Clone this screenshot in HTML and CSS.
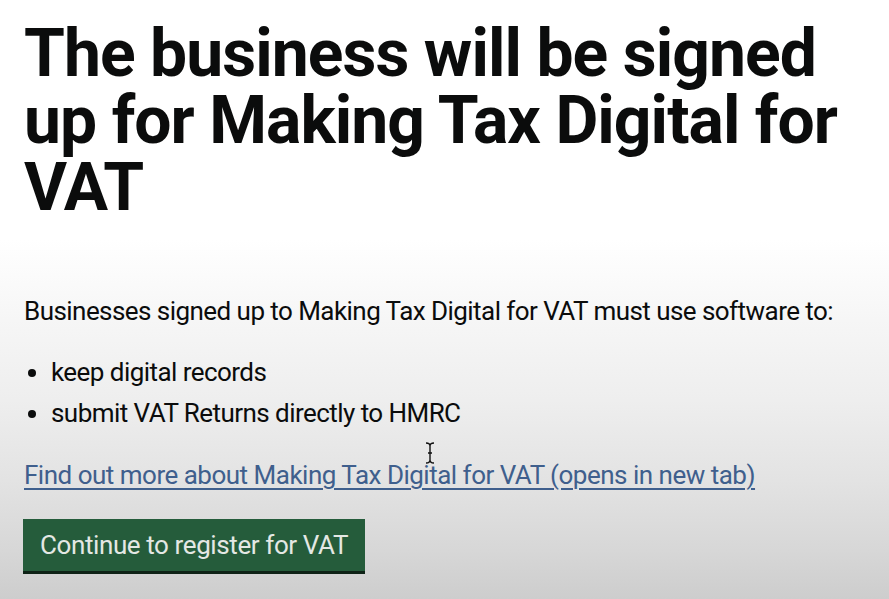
FILE: index.html
```html
<!DOCTYPE html>
<html lang="en">
<head>
    <meta charset="UTF-8">
    <title>Making Tax Digital for VAT</title>
    <link rel="stylesheet" href="styles.css">
</head>
<body>
    <main class="page">
        <h1 class="heading">The business will be signed up for Making Tax Digital for VAT</h1>
        <p class="body-text">Businesses signed up to Making Tax Digital for VAT must use software to:</p>
        <ul class="bullets">
            <li>keep digital records</li>
            <li>submit VAT Returns directly to HMRC</li>
        </ul>
        <p class="link-row">
            <a class="link" href="#">Find out more about Making Tax Digital for VAT (opens in new tab)</a>
            <svg class="cursor" width="10" height="22" viewBox="0 0 10 22">
                <path d="M1 1 Q5 1 5 4 V18 Q5 21 1 21 M9 1 Q5 1 5 4 M5 18 Q5 21 9 21 M3 11 H7" fill="none" stroke="#111" stroke-width="1.4"/>
            </svg>
        </p>
        <button class="button">Continue to register for VAT</button>
    </main>
</body>
</html>
```

FILE: styles.css
```css
html, body {
    height: 100%;
}
body {
    margin: 0;
    font-family: Roboto, 'Liberation Sans', sans-serif;
    color: #0b0c0c;
    background: linear-gradient(#fff 0, #fff 240px, #f6f6f6 320px, #eeeeee 400px, #e3e3e3 480px, #d7d7d7 550px, #cdcdcd 599px);
    overflow: hidden;
}
.page {
    padding: 20px 24px 0 24px;
    width: 830px;
}
.heading {
    margin: 0 0 72px 0;
    font-size: 66px;
    line-height: 67px;
    font-weight: 700;
    letter-spacing: -0.95px;
}
.body-text {
    margin: 0 0 25px 0;
    font-size: 26px;
    line-height: 36px;
    letter-spacing: -0.55px;
}
.bullets {
    margin: 0 0 26px 0;
    padding-left: 27px;
    font-size: 26px;
    line-height: 36px;
    letter-spacing: -0.55px;
}
.bullets li {
    margin-bottom: 5px;
}
.link-row {
    position: relative;
    margin: 0 0 26px 0;
    font-size: 26px;
    line-height: 36px;
    letter-spacing: -0.5px;
}
.link {
    color: #3f5f8d;
    text-decoration: underline;
    text-decoration-thickness: 2px;
    text-underline-offset: 4px;
}
.cursor {
    position: absolute;
    left: 401px;
    top: -15px;
}
.button {
    display: block;
    margin-left: -1px;
    padding: 8px 17px 9px 17px;
    width: 342px;
    height: 52px;
    text-align: left;
    font-family: Roboto, 'Liberation Sans', sans-serif;
    font-size: 26px;
    letter-spacing: -0.4px;
    color: #e4e8e4;
    background: #255c3b;
    border: none;
    box-shadow: 0 3px 0 #0e2216;
}
```
